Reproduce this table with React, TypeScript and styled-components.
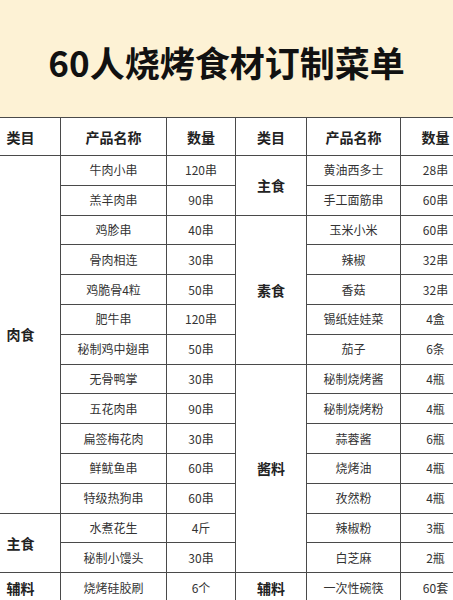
import styled, { createGlobalStyle } from "styled-components";

const GlobalStyle = createGlobalStyle`
  html, body {
    margin: 0;
    padding: 0;
    background: #ffffff;
    overflow: hidden;
  }
  body {
    font-family: "Noto Sans CJK SC", "Noto Sans", sans-serif;
    width: 453px;
    height: 600px;
  }
`;

type Item = { name: string; qty: string };
type Group = { cat: string; items: Item[] };

const leftGroups: Group[] = [
  {
    cat: "肉食",
    items: [
      { name: "牛肉小串", qty: "120串" },
      { name: "羔羊肉串", qty: "90串" },
      { name: "鸡胗串", qty: "40串" },
      { name: "骨肉相连", qty: "30串" },
      { name: "鸡脆骨4粒", qty: "50串" },
      { name: "肥牛串", qty: "120串" },
      { name: "秘制鸡中翅串", qty: "50串" },
      { name: "无骨鸭掌", qty: "30串" },
      { name: "五花肉串", qty: "90串" },
      { name: "扁签梅花肉", qty: "30串" },
      { name: "鲜鱿鱼串", qty: "60串" },
      { name: "特级热狗串", qty: "60串" },
    ],
  },
  {
    cat: "主食",
    items: [
      { name: "水煮花生", qty: "4斤" },
      { name: "秘制小馒头", qty: "30串" },
    ],
  },
  { cat: "辅料", items: [{ name: "烧烤硅胶刷", qty: "6个" }] },
];

const rightGroups: Group[] = [
  {
    cat: "主食",
    items: [
      { name: "黄油西多士", qty: "28串" },
      { name: "手工面筋串", qty: "60串" },
    ],
  },
  {
    cat: "素食",
    items: [
      { name: "玉米小米", qty: "60串" },
      { name: "辣椒", qty: "32串" },
      { name: "香菇", qty: "32串" },
      { name: "锡纸娃娃菜", qty: "4盒" },
      { name: "茄子", qty: "6条" },
    ],
  },
  {
    cat: "酱料",
    items: [
      { name: "秘制烧烤酱", qty: "4瓶" },
      { name: "秘制烧烤粉", qty: "4瓶" },
      { name: "蒜蓉酱", qty: "6瓶" },
      { name: "烧烤油", qty: "4瓶" },
      { name: "孜然粉", qty: "4瓶" },
      { name: "辣椒粉", qty: "3瓶" },
      { name: "白芝麻", qty: "2瓶" },
    ],
  },
  { cat: "辅料", items: [{ name: "一次性碗筷", qty: "60套" }] },
];

type Cell = { cat?: { text: string; span: number }; item: Item };

function flatten(groups: Group[]): Cell[] {
  const out: Cell[] = [];
  groups.forEach((g) =>
    g.items.forEach((item, i) =>
      out.push({ item, cat: i === 0 ? { text: g.cat, span: g.items.length } : undefined })
    )
  );
  return out;
}

const Banner = styled.header`
  height: 117px;
  background: #fdf2d5;
  display: flex;
  align-items: center;
  justify-content: center;
  padding-top: 6px;
  box-sizing: border-box;
`;

const Title = styled.h1`
  margin: 0;
  font-size: 35px;
  font-weight: 700;
  color: #111;
  letter-spacing: 0;
`;

const Menu = styled.table`
  table-layout: fixed;
  border-collapse: collapse;
  width: 490px;
  margin-left: -20px;
`;

const Head = styled.th`
  height: 37px;
  border: 1px solid #4a4a4a;
  font-size: 14px;
  font-weight: 700;
  color: #222;
  text-align: center;
  padding: 0;
`;

const CatCell = styled.td`
  border: 1px solid #4a4a4a;
  font-size: 14px;
  font-weight: 700;
  color: #222;
  text-align: center;
  padding: 0;
`;

const Td = styled.td`
  height: 28.8px;
  border: 1px solid #4a4a4a;
  font-size: 12px;
  line-height: 16px;
  color: #333;
  text-align: center;
  padding: 0;
  white-space: nowrap;
`;

const widths = [80, 106, 69, 71, 94, 70];

export default function App() {
  const left = flatten(leftGroups);
  const right = flatten(rightGroups);
  return (
    <>
      <GlobalStyle />
      <Banner>
        <Title>60人烧烤食材订制菜单</Title>
      </Banner>
      <Menu>
        <colgroup>
          {widths.map((w, i) => (
            <col key={i} style={{ width: w }} />
          ))}
        </colgroup>
        <thead>
          <tr>
            <Head>类目</Head>
            <Head>产品名称</Head>
            <Head>数量</Head>
            <Head>类目</Head>
            <Head>产品名称</Head>
            <Head>数量</Head>
          </tr>
        </thead>
        <tbody>
          {left.map((l, i) => {
            const r = right[i];
            return (
              <tr key={i}>
                {l.cat && <CatCell rowSpan={l.cat.span}>{l.cat.text}</CatCell>}
                <Td>{l.item.name}</Td>
                <Td>{l.item.qty}</Td>
                {r.cat && <CatCell rowSpan={r.cat.span}>{r.cat.text}</CatCell>}
                <Td>{r.item.name}</Td>
                <Td>{r.item.qty}</Td>
              </tr>
            );
          })}
        </tbody>
      </Menu>
    </>
  );
}
